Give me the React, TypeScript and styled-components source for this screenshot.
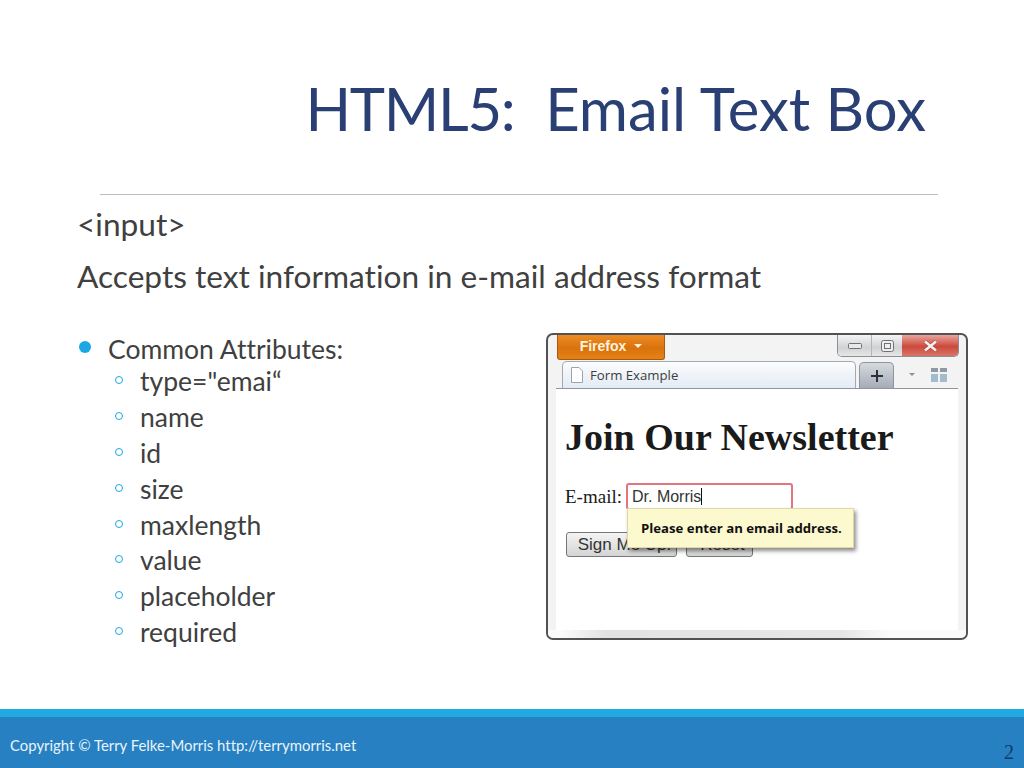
import React from 'react';
import styled, { createGlobalStyle } from 'styled-components';

const GlobalStyle = createGlobalStyle`
  html, body {
    margin: 0;
    padding: 0;
    background: #fff;
  }
`;

const Slide = styled.div`
  width: 1024px;
  height: 768px;
  display: flex;
  flex-direction: column;
  overflow: hidden;
  background: #fff;
  font-family: Lato, 'Open Sans', sans-serif;
  font-variant-ligatures: none;
`;

const Main = styled.div`
  flex: 1;
  min-height: 0;
  display: flex;
  flex-direction: column;
`;

const Title = styled.h1`
  margin: 0;
  height: 194px;
  box-sizing: border-box;
  padding: 70px 98px 0 0;
  text-align: right;
  font-size: 59.8px;
  line-height: 76px;
  font-weight: 400;
  color: #2a4074;
  white-space: pre;
`;

const TitleLabel = styled.span`
  letter-spacing: -1.3px;
`;

const Rule = styled.div`
  height: 1px;
  margin: 0 86px 0 100px;
  background: #bdbdbd;
`;

const Lead = styled.p`
  margin: ${p => p.$top}px 0 0 77px;
  font-size: 31.65px;
  line-height: 38px;
  color: #404040;
`;

const Columns = styled.div`
  display: flex;
  justify-content: space-between;
  padding: 0 56px 0 77px;
  margin-top: 24px;
`;

const Bullets = styled.div`
  display: flex;
  flex-direction: column;
  padding-top: 15px;
`;

const TopBullet = styled.div`
  display: flex;
  align-items: center;
  height: 29px;
  font-size: 26.5px;
  color: #404040;
  &::before {
    content: '';
    width: 12px;
    height: 12px;
    border-radius: 50%;
    background: #1ca7e4;
    margin: 0 17px 0 2px;
    position: relative;
    top: -2px;
  }
`;

const SubBullet = styled.div`
  display: flex;
  align-items: center;
  height: 35.9px;
  margin-left: 38px;
  font-size: 26.5px;
  color: #404040;
  &::before {
    content: '';
    width: 6px;
    height: 6px;
    border-radius: 50%;
    border: 1px solid #1ca7e4;
    margin-right: 17px;
    position: relative;
    top: -1px;
  }
`;

const Window = styled.div`
  position: relative;
  width: 422px;
  height: 307px;
  margin-top: 14px;
  box-sizing: border-box;
  border: 2px solid #525252;
  border-radius: 7px;
  background: #f3f3f3;
  display: flex;
  flex-direction: column;
  overflow: hidden;
`;

const TitleRow = styled.div`
  height: 25px;
  display: flex;
  justify-content: space-between;
  padding: 0 7px 0 9px;
  flex: none;
`;

const FirefoxButton = styled.div`
  width: 108px;
  height: 25px;
  box-sizing: border-box;
  border: 1px solid #a9590f;
  border-top: 0;
  border-radius: 0 0 3px 3px;
  background: linear-gradient(#ee8c23, #d9720d 55%, #e58217);
  color: #fff3dc;
  font: 700 14px 'Liberation Sans', sans-serif;
  display: flex;
  align-items: center;
  justify-content: center;
  gap: 8px;
  padding-bottom: 3px;
  &::after {
    content: '';
    border-left: 4px solid transparent;
    border-right: 4px solid transparent;
    border-top: 4px solid #fff3dc;
  }
`;

const Controls = styled.div`
  display: flex;
  height: 22px;
  box-sizing: border-box;
  border: 1px solid #8b8f96;
  border-top: 0;
  border-radius: 0 0 5px 5px;
  overflow: hidden;
`;

const Control = styled.div`
  width: ${p => p.$w}px;
  display: flex;
  align-items: center;
  justify-content: center;
  border-left: 1px solid ${p => (p.$first ? 'transparent' : '#b3b5b8')};
  background: ${p => (p.$close
    ? 'linear-gradient(#e9a59c, #cc4a3c 55%, #d9756a)'
    : 'linear-gradient(#f4f4f4, #d0d2d4 60%, #e6e6e6)')};
`;

const TabRow = styled.div`
  height: 29px;
  flex: none;
  display: flex;
  align-items: flex-end;
  margin: 0 8px;
  box-sizing: border-box;
  border-bottom: 1px solid #8f959c;
`;

const Tab = styled.div`
  width: 294px;
  height: 27px;
  box-sizing: border-box;
  margin-left: 6px;
  border: 1px solid #a5a9ae;
  border-bottom: 0;
  border-radius: 5px 5px 0 0;
  background: linear-gradient(#fbfcfd, #e3ebf5);
  display: flex;
  align-items: center;
  gap: 6px;
  padding-left: 7px;
  font: 13.2px 'Open Sans', sans-serif;
  color: #3e3e3e;
`;

const NewTab = styled.div`
  width: 35px;
  height: 26px;
  box-sizing: border-box;
  margin-left: 3px;
  border: 1px solid #8f959c;
  border-bottom: 0;
  border-radius: 5px 5px 0 0;
  background: linear-gradient(#d6dae0, #a5acb6);
  display: flex;
  align-items: center;
  justify-content: center;
`;

const TabTools = styled.div`
  flex: 1;
  display: flex;
  align-items: center;
  justify-content: flex-end;
  gap: 16px;
  height: 27px;
  padding-right: 11px;
  &::before {
    content: '';
    border-left: 3px solid transparent;
    border-right: 3px solid transparent;
    border-top: 3px solid #8c9198;
  }
`;

const Page = styled.div`
  position: relative;
  flex: 1;
  margin: 0 8px;
  padding: 28px 9px 0 9px;
  background: #fff;
  font-family: 'Liberation Serif', serif;
  color: #1a1a1a;
`;

const BottomEdge = styled.div`
  height: 8px;
  flex: none;
  background: linear-gradient(90deg, #fbfbfb 3%, #e2e2e2 14%, #e6e6e6 70%, #fafafa 82%);
`;

const PageHeading = styled.div`
  font-size: 38px;
  line-height: 40px;
  font-weight: 700;
  white-space: nowrap;
`;

const FormRow = styled.div`
  display: flex;
  align-items: center;
  gap: 4px;
  margin-top: 26px;
  font-size: 19px;
`;

const EmailInput = styled.div`
  width: 167px;
  height: 27px;
  box-sizing: border-box;
  border: 2px solid #e2757f;
  border-radius: 3px;
  padding-left: 4px;
  display: flex;
  align-items: center;
  font: 16px 'Liberation Sans', sans-serif;
  color: #333;
`;

const Caret = styled.span`
  width: 1px;
  height: 17px;
  background: #111;
`;

const ButtonRow = styled.div`
  display: flex;
  gap: 9px;
  margin-top: 22px;
  padding-left: 1px;
`;

const FormButton = styled.div`
  width: ${p => p.$w}px;
  height: 25px;
  box-sizing: border-box;
  border: 1px solid #777;
  border-radius: 3px;
  background: linear-gradient(#f4f4f4, #d4d4d4);
  font: 17px 'Liberation Sans', sans-serif;
  color: #333;
  display: flex;
  align-items: center;
  justify-content: center;
  padding-left: 6px;
  white-space: nowrap;
  overflow: hidden;
`;

const Tooltip = styled.div`
  position: absolute;
  left: 71px;
  top: 119px;
  width: 227px;
  height: 40px;
  box-sizing: border-box;
  background: #fdf9cf;
  border: 1px solid #dcd9a8;
  box-shadow: 2px 3px 4px rgba(0, 0, 0, 0.45);
  display: flex;
  align-items: center;
  padding-left: 13px;
  font: 700 13.2px 'Open Sans', sans-serif;
  color: #111;
  white-space: nowrap;
`;

const Footer = styled.div`
  height: 59px;
  flex: none;
  box-sizing: border-box;
  border-top: 8px solid #1fabe2;
  background: #2680c2;
  display: flex;
  justify-content: space-between;
  padding: 0 10px;
`;

const Copyright = styled.div`
  margin-top: 18px;
  font-size: 14.9px;
  line-height: 20px;
  color: #eaf4fb;
`;

const PageNumber = styled.div`
  margin-top: 24px;
  font: 20px 'Liberation Serif', serif;
  line-height: 22px;
  color: #0f3a6b;
`;

const items = ['type="emai“', 'name', 'id', 'size', 'maxlength', 'value', 'placeholder', 'required'];

export default function App() {
  return (
    <Slide>
      <GlobalStyle />
      <Main>
        <Title><TitleLabel>HTML5:</TitleLabel>  Email Text Box</Title>
        <Rule />
        <Lead $top={10}>&lt;input&gt;</Lead>
        <Lead $top={14}>Accepts text information in e-mail address format</Lead>
        <Columns>
          <Bullets>
            <TopBullet>Common Attributes:</TopBullet>
            {items.map(item => (
              <SubBullet key={item}>{item}</SubBullet>
            ))}
          </Bullets>
          <Window>
            <TitleRow>
              <FirefoxButton>Firefox</FirefoxButton>
              <Controls>
                <Control $w={32} $first>
                  <svg width="14" height="8" viewBox="0 0 14 8">
                    <rect x="0.5" y="1.5" width="13" height="5" rx="1" fill="#e8e8e8" stroke="#6d7278" />
                  </svg>
                </Control>
                <Control $w={30}>
                  <svg width="13" height="12" viewBox="0 0 13 12">
                    <rect x="0.5" y="0.5" width="12" height="11" rx="2" fill="#eee" stroke="#6d7278" />
                    <rect x="3.5" y="3.5" width="6" height="5" fill="none" stroke="#6d7278" />
                  </svg>
                </Control>
                <Control $w={55} $close $first>
                  <svg width="15" height="12" viewBox="0 0 15 12">
                    <path d="M2 1.5 13 10.5M13 1.5 2 10.5" stroke="#8a3a30" strokeWidth="4" opacity="0.5" />
                    <path d="M2 1.5 13 10.5M13 1.5 2 10.5" stroke="#f6f1f0" strokeWidth="2.6" />
                  </svg>
                </Control>
              </Controls>
            </TitleRow>
            <TabRow>
              <Tab>
                <svg width="14" height="18" viewBox="0 0 14 18">
                  <path d="M1.5 1.5H9L12.5 5V16.5H1.5Z" fill="#fff" stroke="#9ba3ad" />
                </svg>
                Form Example
              </Tab>
              <NewTab>
                <svg width="14" height="14" viewBox="0 0 14 14">
                  <path d="M7 1V13M1 7H13" stroke="#2a3138" strokeWidth="2" />
                </svg>
              </NewTab>
              <TabTools>
                <svg width="16" height="14" viewBox="0 0 16 14">
                  <path d="M0 0H7V4H0ZM9 0H16V4H9Z" fill="#8f9aa5" />
                  <path d="M0 6H7V14H0ZM9 6H16V14H9Z" fill="#a3bccd" />
                </svg>
              </TabTools>
            </TabRow>
            <Page>
              <PageHeading>Join Our Newsletter</PageHeading>
              <FormRow>
                E-mail:
                <EmailInput>
                  Dr. Morris
                  <Caret />
                </EmailInput>
              </FormRow>
              <ButtonRow>
                <FormButton $w={111}>Sign Me Up!</FormButton>
                <FormButton $w={67}>Reset</FormButton>
              </ButtonRow>
              <Tooltip>Please enter an email address.</Tooltip>
            </Page>
            <BottomEdge />
          </Window>
        </Columns>
      </Main>
      <Footer>
        <Copyright>Copyright © Terry Felke-Morris http://terrymorris.net</Copyright>
        <PageNumber>2</PageNumber>
      </Footer>
    </Slide>
  );
}
